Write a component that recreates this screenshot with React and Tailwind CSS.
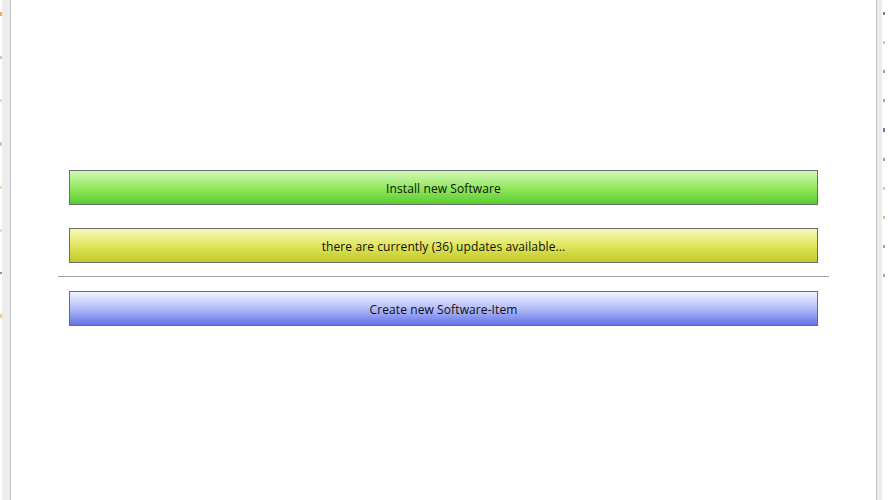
import React from 'react';

const actions = [
  { label: 'Install new Software', cls: 'bg-gradient-to-b from-[#d2f8b8] via-[#94e85e] to-[#58cc2c]' },
  { label: 'there are currently (36) updates available...', cls: 'bg-gradient-to-b from-[#f6f9b8] via-[#e0e65a] to-[#c2c828]' },
];

function ActionButton({ label, cls }) {
  return (
    <button className={`h-[35px] w-full border border-[#6c6c6c] pt-[2px] text-[12px] tracking-[0.1px] text-[#111] ${cls}`}>
      {label}
    </button>
  );
}

export default function App() {
  return (
    <div className="flex h-[500px] w-[888px] overflow-hidden bg-white" style={{ fontFamily: '"Open Sans", "Noto Sans", sans-serif' }}>
      {/* left neighbour window edge */}
      <div className="flex w-[11px] shrink-0">
        <div className="flex w-[2px] flex-col gap-[40px] bg-white pt-[12px]">
          <div className="h-[4px] bg-[#e8b060]" />
          <div className="h-[3px] bg-[#b8cce0]" />
          <div className="h-[3px] bg-[#f4d8b0]" />
          <div className="h-[4px] bg-[#f4c490]" />
          <div className="h-[3px] bg-[#f4d8b0]" />
          <div className="h-[3px] bg-[#f4d8b0]" />
          <div className="h-[2px] bg-[#909090]" />
          <div className="h-[4px] bg-[#f4c490]" />
        </div>
        <div className="w-[8px] bg-[#ececec]" />
        <div className="w-[1px] bg-[#c4c4c4]" />
      </div>

      <div className="flex flex-1 flex-col px-[47px] pt-[170px]">
        <div className="flex flex-col gap-[23px] px-[11px]">
          {actions.map(a => (
            <ActionButton key={a.label} {...a} />
          ))}
        </div>
        <div className="mb-[14px] mt-[13px] h-px bg-[#a0a0a0]" />
        <div className="px-[11px]">
          <ActionButton label="Create new Software-Item" cls="bg-gradient-to-b from-[#f2f4ff] via-[#b4bcf8] to-[#6670e6]" />
        </div>
      </div>

      {/* right neighbour window edge */}
      <div className="flex w-[12px] shrink-0">
        <div className="w-[1px] bg-[#c4c4c4]" />
        <div className="w-[5px] bg-[#ececec]" />
        <div className="flex flex-1 flex-col gap-[26px] bg-white pl-[1px] pt-[12px]">
          <div className="h-[3px] w-[2px] bg-[#808080]" />
          <div className="h-[3px] w-[2px] bg-[#b8cce0]" />
          <div className="h-[3px] w-[2px] bg-[#a0a0a0]" />
          <div className="h-[3px] w-[2px] bg-[#a0a0a0]" />
          <div className="h-[4px] w-[2px] bg-[#6078b0]" />
          <div className="h-[3px] w-[2px] bg-[#a0a0a0]" />
          <div className="h-[3px] w-[2px] bg-[#b8cce0]" />
          <div className="h-[3px] w-[2px] bg-[#e8b888]" />
          <div className="h-[3px] w-[2px] bg-[#a0a0a0]" />
          <div className="h-[3px] w-[2px] bg-[#a0a0a0]" />
        </div>
      </div>
    </div>
  );
}
